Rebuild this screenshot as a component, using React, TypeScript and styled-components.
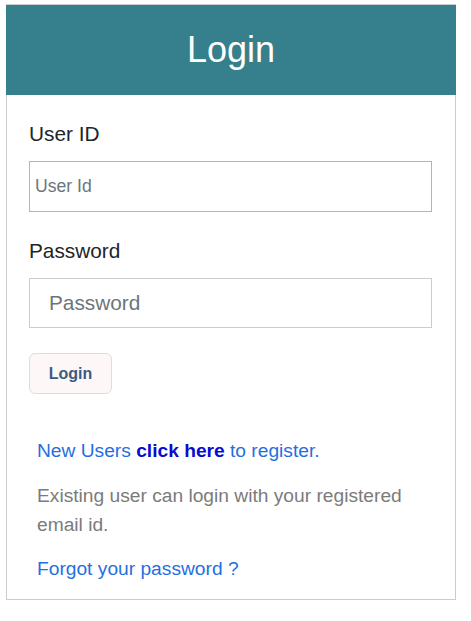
import React from 'react';
import styled, { createGlobalStyle } from 'styled-components';

const GlobalStyle = createGlobalStyle`
  body {
    margin: 0;
    background: #ffffff;
    font-family: 'Liberation Sans', Arial, sans-serif;
  }
`;

const Page = styled.div`
  padding: 4px 15px 0 6px;
`;

const Card = styled.div`
  width: 450px;
  box-sizing: border-box;
  border: 1px solid #cccccc;
  background: #ffffff;
`;

const Header = styled.div`
  height: 90px;
  margin: 0 -1px;
  background: #367f8c;
  color: #ffffff;
  font-size: 36px;
  display: flex;
  align-items: center;
  justify-content: center;
`;

const Body = styled.div`
  display: flex;
  flex-direction: column;
  padding: 26px 23px 16px 22px;
`;

const Label = styled.label<{ $top?: number }>`
  font-size: 20.8px;
  line-height: 25px;
  color: #212529;
  margin-top: ${(p) => p.$top ?? 0}px;
`;

const Input = styled.input<{ $small?: boolean; $dark?: boolean }>`
  box-sizing: border-box;
  width: 100%;
  height: ${(p) => (p.$small ? 51 : 50)}px;
  margin-top: 15px;
  border: 1px solid ${(p) => (p.$dark ? '#b4b4b4' : '#cccccc')};
  border-radius: 0;
  padding: 0 0 0 ${(p) => (p.$small ? 5 : 19)}px;
  font-family: 'Liberation Sans', Arial, sans-serif;
  font-size: ${(p) => (p.$small ? 17.6 : 20.8)}px;
  color: #333333;
  outline: none;
  &::placeholder {
    color: #6c757d;
  }
`;

const Button = styled.button`
  align-self: flex-start;
  width: 83px;
  height: 41px;
  margin-top: 25px;
  background: #fdf8f7;
  border: 1px solid #dddddd;
  border-radius: 6px;
  font-family: 'Liberation Sans', Arial, sans-serif;
  font-weight: bold;
  font-size: 16px;
  color: #3b5a85;
`;

const Note = styled.p<{ $top: number; $muted?: boolean }>`
  margin: ${(p) => p.$top}px 0 0 8px;
  font-size: 19.2px;
  line-height: 29px;
  color: ${(p) => (p.$muted ? '#7b7b7b' : '#1f6fe0')};
`;

const Strong = styled.a`
  font-weight: bold;
  color: #0a0ad0;
  text-decoration: none;
`;

export default function App() {
  return (
    <Page>
      <GlobalStyle />
      <Card>
        <Header>Login</Header>
        <Body>
          <Label>User ID</Label>
          <Input $small $dark placeholder="User Id" />
          <Label $top={26}>Password</Label>
          <Input type="password" placeholder="Password" />
          <Button>Login</Button>
          <Note $top={42}>
            New Users <Strong href="#">click here</Strong> to register.
          </Note>
          <Note $top={16} $muted>
            Existing user can login with your registered email id.
          </Note>
          <Note $top={15}>Forgot your password ?</Note>
        </Body>
      </Card>
    </Page>
  );
}
